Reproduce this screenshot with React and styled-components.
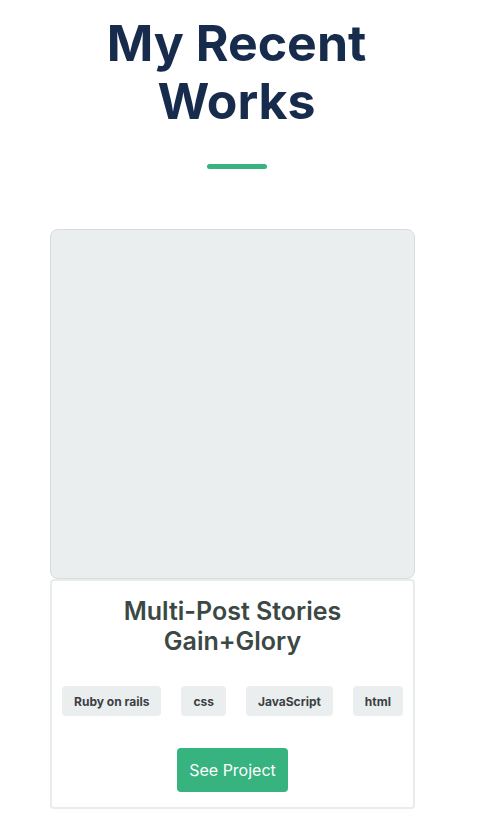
import React from "react";
import styled, { createGlobalStyle } from "styled-components";

const Global = createGlobalStyle`
  html, body { margin: 0; padding: 0; background: #ffffff; }
  body { font-family: Inter, "Noto Sans", sans-serif; }
`;

const Page = styled.main`
  width: 478px;
  padding: 14px 5px 40px 0;
  box-sizing: border-box;
`;

const Heading = styled.h1`
  margin: 0 auto;
  width: 300px;
  text-align: center;
  font-size: 50px;
  line-height: 58px;
  font-weight: 700;
  color: #172b4d;
`;

const Underline = styled.div`
  width: 60px;
  height: 5px;
  border-radius: 3px;
  background: #36b37e;
  margin: 34px auto 0;
`;

const Card = styled.article`
  width: 365px;
  margin: 60px 0 0 50px;
  display: flex;
  flex-direction: column;
`;

const Preview = styled.div`
  height: 350px;
  box-sizing: border-box;
  background: #ebeeee;
  border: 1px solid #d6dddb;
  border-radius: 8px;
`;

const Body = styled.div`
  box-sizing: border-box;
  border: 2px solid #e9ecec;
  border-radius: 4px;
  padding: 15px 8px 15px;
  display: flex;
  flex-direction: column;
  align-items: center;
`;

const Title = styled.h2`
  margin: 0;
  width: 250px;
  text-align: center;
  font-size: 25px;
  line-height: 30px;
  font-weight: 600;
  color: #3b4844;
`;

const Tags = styled.ul`
  list-style: none;
  margin: 30px 0 0;
  padding: 0;
  display: flex;
  gap: 20px;
  justify-content: center;
`;

const Tag = styled.li`
  height: 30px;
  padding: 0 12px;
  display: flex;
  align-items: center;
  background: #ebeeee;
  border-radius: 4px;
  font-size: 12px;
  font-weight: 700;
  color: #3a3f44;
`;

const Button = styled.button`
  margin-top: 32px;
  height: 44px;
  padding: 0 12px;
  border: none;
  border-radius: 4px;
  background: #36b37e;
  color: #ffffff;
  font-family: Inter, "Noto Sans", sans-serif;
  font-size: 16px;
  font-weight: 400;
  cursor: pointer;
`;

export default function App() {
  const tags = ["Ruby on rails", "css", "JavaScript", "html"];
  return (
    <>
      <Global />
      <Page>
        <Heading>My Recent Works</Heading>
        <Underline />
        <Card>
          <Preview />
          <Body>
            <Title>Multi-Post Stories Gain+Glory</Title>
            <Tags>
              {tags.map((t) => (
                <Tag key={t}>{t}</Tag>
              ))}
            </Tags>
            <Button>See Project</Button>
          </Body>
        </Card>
      </Page>
    </>
  );
}
